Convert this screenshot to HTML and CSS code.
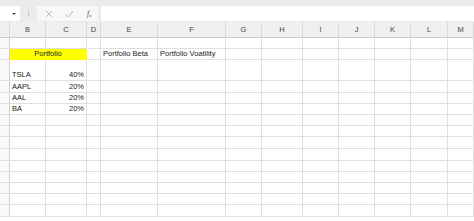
FILE: index.html
```html
<!DOCTYPE html>
<html>
<head>
<meta charset="utf-8">
<link rel="stylesheet" href="styles.css">
</head>
<body>
<div class="toolbar">
  <div class="namebox"><span class="arrow"></span></div>
  <div class="sep"><span></span><span></span><span></span></div>
  <div class="fbtns">
    <svg class="ico" width="8" height="8" viewBox="0 0 8 8"><path d="M1 1L7 7M7 1L1 7" stroke="#b8b8b8" stroke-width="1" fill="none"/></svg>
    <svg class="ico" width="9" height="8" viewBox="0 0 9 8"><path d="M1 4.5L3.5 7L8 1" stroke="#b8b8b8" stroke-width="1" fill="none"/></svg>
    <span class="fx">f<sub>x</sub></span>
  </div>
  <div class="formula"></div>
</div>
<div class="sheet">
  <div class="hd corner"></div><div class="hd">B</div><div class="hd">C</div><div class="hd">D</div><div class="hd">E</div><div class="hd">F</div><div class="hd">G</div><div class="hd">H</div><div class="hd">I</div><div class="hd">J</div><div class="hd">K</div><div class="hd">L</div><div class="hd">M</div>

  <div class="rh"></div><div class="c"></div><div class="c"></div><div class="c"></div><div class="c"></div><div class="c"></div><div class="c"></div><div class="c"></div><div class="c"></div><div class="c"></div><div class="c"></div><div class="c"></div><div class="c"></div>

  <div class="rh"></div><div class="c merged">Portfolio</div><div class="c"></div><div class="c">Portfolio Beta</div><div class="c">Portfolio Voatility</div><div class="c"></div><div class="c"></div><div class="c"></div><div class="c"></div><div class="c"></div><div class="c"></div><div class="c"></div>

  <div class="rh"></div><div class="c">TSLA</div><div class="c num">40%</div><div class="c"></div><div class="c"></div><div class="c"></div><div class="c"></div><div class="c"></div><div class="c"></div><div class="c"></div><div class="c"></div><div class="c"></div><div class="c"></div>

  <div class="rh"></div><div class="c">AAPL</div><div class="c num">20%</div><div class="c"></div><div class="c"></div><div class="c"></div><div class="c"></div><div class="c"></div><div class="c"></div><div class="c"></div><div class="c"></div><div class="c"></div><div class="c"></div>

  <div class="rh"></div><div class="c">AAL</div><div class="c num">20%</div><div class="c"></div><div class="c"></div><div class="c"></div><div class="c"></div><div class="c"></div><div class="c"></div><div class="c"></div><div class="c"></div><div class="c"></div><div class="c"></div>

  <div class="rh"></div><div class="c">BA</div><div class="c num">20%</div><div class="c"></div><div class="c"></div><div class="c"></div><div class="c"></div><div class="c"></div><div class="c"></div><div class="c"></div><div class="c"></div><div class="c"></div><div class="c"></div>

  <div class="rh"></div><div class="c"></div><div class="c"></div><div class="c"></div><div class="c"></div><div class="c"></div><div class="c"></div><div class="c"></div><div class="c"></div><div class="c"></div><div class="c"></div><div class="c"></div><div class="c"></div>
  <div class="rh"></div><div class="c"></div><div class="c"></div><div class="c"></div><div class="c"></div><div class="c"></div><div class="c"></div><div class="c"></div><div class="c"></div><div class="c"></div><div class="c"></div><div class="c"></div><div class="c"></div>
  <div class="rh"></div><div class="c"></div><div class="c"></div><div class="c"></div><div class="c"></div><div class="c"></div><div class="c"></div><div class="c"></div><div class="c"></div><div class="c"></div><div class="c"></div><div class="c"></div><div class="c"></div>
  <div class="rh"></div><div class="c"></div><div class="c"></div><div class="c"></div><div class="c"></div><div class="c"></div><div class="c"></div><div class="c"></div><div class="c"></div><div class="c"></div><div class="c"></div><div class="c"></div><div class="c"></div>
  <div class="rh"></div><div class="c"></div><div class="c"></div><div class="c"></div><div class="c"></div><div class="c"></div><div class="c"></div><div class="c"></div><div class="c"></div><div class="c"></div><div class="c"></div><div class="c"></div><div class="c"></div>
  <div class="rh"></div><div class="c"></div><div class="c"></div><div class="c"></div><div class="c"></div><div class="c"></div><div class="c"></div><div class="c"></div><div class="c"></div><div class="c"></div><div class="c"></div><div class="c"></div><div class="c"></div>
  <div class="rh"></div><div class="c"></div><div class="c"></div><div class="c"></div><div class="c"></div><div class="c"></div><div class="c"></div><div class="c"></div><div class="c"></div><div class="c"></div><div class="c"></div><div class="c"></div><div class="c"></div>
  <div class="rh"></div><div class="c"></div><div class="c"></div><div class="c"></div><div class="c"></div><div class="c"></div><div class="c"></div><div class="c"></div><div class="c"></div><div class="c"></div><div class="c"></div><div class="c"></div><div class="c"></div>
  <div class="rh"></div><div class="c"></div><div class="c"></div><div class="c"></div><div class="c"></div><div class="c"></div><div class="c"></div><div class="c"></div><div class="c"></div><div class="c"></div><div class="c"></div><div class="c"></div><div class="c"></div>
</div>
</body>
</html>
```
FILE: styles.css
```css
* { box-sizing: border-box; }
html, body { margin: 0; padding: 0; }
body {
  width: 474px;
  height: 221px;
  overflow: hidden;
  background: #ffffff;
  font-family: "Liberation Sans", Arial, sans-serif;
  font-size: 7.5px;
  color: #222222;
}
.toolbar {
  height: 22px;
  background: #ebebeb;
  display: flex;
  align-items: flex-start;
  padding-top: 6px;
}
.namebox {
  width: 20px;
  height: 15px;
  background: #ffffff;
  display: flex;
  align-items: center;
  justify-content: flex-end;
  padding-right: 4px;
}
.arrow {
  width: 0;
  height: 0;
  border-left: 2px solid transparent;
  border-right: 2px solid transparent;
  border-top: 2px solid #444444;
}
.sep {
  width: 17px;
  height: 15px;
  display: flex;
  flex-direction: column;
  align-items: center;
  justify-content: center;
  gap: 1px;
}
.sep span {
  width: 1px;
  height: 1px;
  background: #aaaaaa;
}
.fbtns {
  width: 61px;
  height: 15px;
  background: #f8f8f8;
  display: flex;
  align-items: center;
  padding-left: 8px;
  gap: 12px;
}
.fx {
  font-family: "Liberation Serif", serif;
  font-style: italic;
  font-size: 8px;
  color: #555555;
  margin-left: 1px;
}
.fx sub { font-size: 5px; vertical-align: -1px; }
.formula {
  flex: 1;
  height: 15px;
  margin-left: 3px;
  background: #ffffff;
}
.sheet {
  display: grid;
  grid-template-columns: 10px 36px 41px 14px 57px 68px 36px 41px 36px 36px 36px 37px 26px;
  grid-template-rows: 16px 11px 11px 21px 12px 11px 11px 11px 11px 12px 12px 11px 11px 11px 11px 12px;
}
.hd {
  background: #efefef;
  border-right: 1px solid #d8d8d8;
  border-bottom: 1px solid #cccccc;
  display: flex;
  align-items: center;
  justify-content: center;
  color: #444444;
  font-size: 7.5px;
}
.corner { background: #efefef; }
.rh {
  background: #fafafa;
  border-right: 1px solid #d0d0d0;
  border-bottom: 1px solid #e2e2e2;
}
.c {
  border-right: 1px solid #dfdfdf;
  border-bottom: 1px solid #dfdfdf;
  display: flex;
  align-items: flex-end;
  padding: 0 2px 1px 2px;
  white-space: nowrap;
  line-height: 9px;
}
.merged {
  grid-column: span 2;
  background: #ffff00;
  justify-content: center;
  border-color: #ffff00;
}
.num { justify-content: flex-end; }
```
